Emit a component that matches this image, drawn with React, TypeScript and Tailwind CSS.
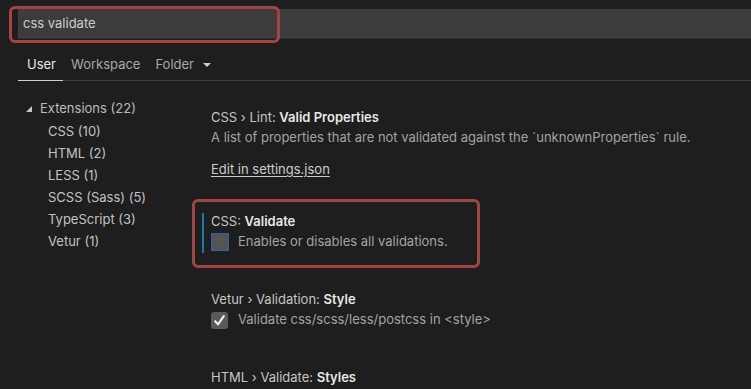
import React from "react"

type TreeNode = { label: string; count: number }

const tree: TreeNode[] = [
    { label: "CSS", count: 10 },
    { label: "HTML", count: 2 },
    { label: "LESS", count: 1 },
    { label: "SCSS (Sass)", count: 5 },
    { label: "TypeScript", count: 3 },
    { label: "Vetur", count: 1 },
]

function Checkbox({ checked }: { checked?: boolean }) {
    return (
        <div
            className={
                checked
                    ? "w-[17px] h-[17px] rounded-[3px] bg-[#5a5a5a] flex items-center justify-center"
                    : "w-[18px] h-[18px] bg-[#555555] border border-[#2c5fb8]"
            }
        >
            {checked && (
                <svg width="13" height="13" viewBox="0 0 13 13" fill="none">
                    <path d="M2.2 7.2 L5 10.4 L10.8 2.2" stroke="#f2f2f2" strokeWidth="2.1" strokeLinecap="round" strokeLinejoin="round" />
                </svg>
            )}
        </div>
    )
}

function Title({ category, name }: { category: string; name: string }) {
    return (
        <div className="h-[20px] leading-[20px] text-[13px] text-[#c5c5c5]">
            {category}
            <span className="font-semibold text-[#e8e8e8]">{name}</span>
        </div>
    )
}

export default function App() {
    return (
        <div
            className="relative w-[751px] h-[389px] overflow-hidden bg-[#1e1e1e] text-[#cccccc]"
            style={{ fontFamily: "Inter, 'Open Sans', sans-serif" }}
        >
            {/* search */}
            <div className="pt-[9px] pl-[18px]">
                <div className="h-[30px] bg-[#3c3c3c] border-b border-[#333333] flex items-center pl-[5px] text-[13px] text-[#cccccc]">
                    css validate
                </div>
            </div>

            {/* tabs */}
            <div className="ml-[18px] mt-[10px] h-[32px] flex items-stretch border-b border-[#3a3a3a] text-[13px]">
                <div className="pl-[9px] pr-[7px] pt-px flex items-center text-[#e7e7e7] border-b border-[#cfcfcf] -mb-px">User</div>
                <div className="pl-[8px] pr-[7px] pt-px flex items-center text-[#a9a9a9]">Workspace</div>
                <div className="pl-[8px] pt-px flex items-center text-[#a9a9a9] gap-[9px]">
                    Folder
                    <svg width="8" height="4" viewBox="0 0 8 4">
                        <path d="M0 0 L8 0 L4 4 Z" fill="#cccccc" />
                    </svg>
                </div>
            </div>

            {/* body */}
            <div className="flex pt-[15px]">
                <div className="w-[193px] shrink-0 pl-[26px] pt-[2px] text-[13px]">
                    <div className="h-[22px] flex items-center text-[#bbbbbb]">
                        <svg width="6" height="6" viewBox="0 0 6 6" className="mr-[8px]">
                            <path d="M6 0 L6 6 L0 6 Z" fill="#c8c8c8" />
                        </svg>
                        Extensions (22)
                    </div>
                    {tree.map((n) => (
                        <div key={n.label} className="h-[22px] leading-[22px] pl-[22px] text-[#c2c2c2]">
                            {n.label} ({n.count})
                        </div>
                    ))}
                </div>

                <div className="flex-1 pl-[18px] text-[13px]">
                    <div className="h-[104px] pt-[11px]">
                        <Title category="CSS › Lint: " name="Valid Properties" />
                        <div className="h-[20px] leading-[20px] text-[#a3a3a3] whitespace-nowrap">
                            A list of properties that are not validated against the `unknownProperties` rule.
                        </div>
                        <div className="mt-[12px] h-[20px] leading-[20px] text-[#cccccc] underline underline-offset-2">
                            Edit in settings.json
                        </div>
                    </div>

                    <div className="relative h-[78px] pt-[11px]">
                        <div className="absolute left-[-9px] top-[13px] w-[2px] h-[40px] bg-[#137fa6]" />
                        <Title category="CSS: " name="Validate" />
                        <div className="h-[22px] flex items-center gap-[9px] text-[#a3a3a3]">
                            <Checkbox />
                            Enables or disables all validations.
                        </div>
                    </div>

                    <div className="h-[78px] pt-[11px]">
                        <Title category="Vetur › Validation: " name="Style" />
                        <div className="h-[22px] flex items-center gap-[10px] text-[#a3a3a3]">
                            <Checkbox checked />
                            {"Validate css/scss/less/postcss in <style>"}
                        </div>
                    </div>

                    <div className="pt-[11px]">
                        <Title category="HTML › Validate: " name="Styles" />
                    </div>
                </div>
            </div>

            {/* annotation outlines */}
            <div className="absolute left-[9px] top-[6px] w-[271px] h-[37px] rounded-[6px] border-[3px] border-[#a24445]" />
            <div className="absolute left-[192px] top-[199px] w-[288px] h-[69px] rounded-[6px] border-[3px] border-[#a24445]" />
        </div>
    )
}
